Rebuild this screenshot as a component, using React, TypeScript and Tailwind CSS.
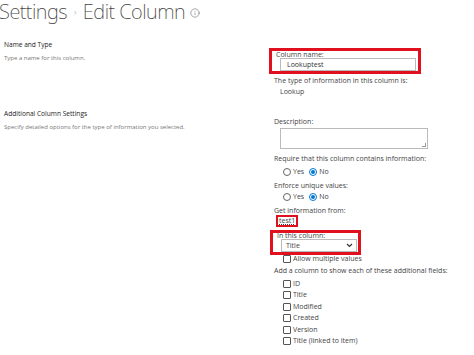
import React from 'react'
import { Info } from 'lucide-react'

const font = "font-['Open_Sans','Liberation_Sans',sans-serif]"

function Radio({ label, checked }: { label: string; checked?: boolean }) {
  return (
    <span className="flex items-center gap-[2px] mr-[5px]">
      <span
        className={
          'w-[8px] h-[8px] rounded-full border flex items-center justify-center ' +
          (checked ? 'border-[#0078d4]' : 'border-[#666]')
        }
      >
        {checked && <span className="w-[4px] h-[4px] rounded-full bg-[#0078d4]" />}
      </span>
      {label}
    </span>
  )
}

function Check({ label }: { label: string }) {
  return (
    <div className="flex items-center gap-[2px] h-[11.4px]">
      <span className="w-[8px] h-[8px] border border-[#555] rounded-[1px] bg-white" />
      <span>{label}</span>
    </div>
  )
}

const fields = ['ID', 'Title', 'Modified', 'Created', 'Version', 'Title (linked to item)']

export default function App() {
  return (
    <div className={'w-[474px] h-[355px] overflow-hidden bg-white text-[#333] ' + font}>
      <div className="flex items-center text-[20px] font-extralight text-[#444] leading-[24px] tracking-[-0.5px] font-['Noto_Sans','Lato',sans-serif]">
        <span className="-ml-[1px]">Settings</span>
        <span className="mx-[7px] text-[10px] text-[#999]">›</span>
        <span>Edit Column</span>
        <Info size={10} strokeWidth={1.4} className="ml-[5px] mt-[1px] text-[#666]" />
      </div>

      <div className="flex text-[7px] leading-[12px]">
        <div className="w-[270px] pl-[4px] pt-[15px]">
          <div className="text-[6.6px] text-[#222]">Name and Type</div>
          <div className="text-[6px] text-[#777] mt-[1px]">Type a name for this column.</div>
        </div>
        <div className="pt-[24px]">
          <div className="w-[152px] h-[26px] border-[3px] border-[#e0101e] pl-[4px] -ml-[1px]">
            <div className="leading-[7px] h-[7px] text-[#444]">Column name:</div>
            <div className="ml-[4px] w-[136px] h-[13px] border border-[#bbb] pl-[6px] leading-[11px]">
              Lookuptest
            </div>
          </div>
          <div className="mt-[1px] ml-[4px] text-[#444]">The type of information in this column is:</div>
          <div className="ml-[10px] -mt-[1px] text-[#444]">Lookup</div>
        </div>
      </div>

      <div className="flex text-[7px] leading-[12px]">
        <div className="w-[270px] pl-[4px] pt-[10px]">
          <div className="text-[6.6px] text-[#222]">Additional Column Settings</div>
          <div className="text-[6px] text-[#777] mt-[1px]">
            Specify detailed options for the type of information you selected.
          </div>
        </div>
        <div className="pt-[18px] pl-[4px] text-[#444]">
          <div className="h-[12px]">Description:</div>
          <div className="ml-[6px] w-[148px] h-[21px] border border-[#bbb] relative">
            <span className="absolute right-[1px] bottom-[1px] w-[4px] h-[4px] border-r border-b border-[#999]" />
          </div>
          <div className="mt-[4px] h-[12px]">Require that this column contains information:</div>
          <div className="flex items-center pl-[9px] h-[12px] mt-[1px]">
            <Radio label="Yes" />
            <Radio label="No" checked />
          </div>
          <div className="mt-[2px] h-[11px]">Enforce unique values:</div>
          <div className="flex items-center pl-[9px] h-[12px]">
            <Radio label="Yes" />
            <Radio label="No" checked />
          </div>
          <div className="mt-[2px] h-[10px] leading-[11px]">Get information from:</div>
          <div className="ml-[2px] w-fit h-[12px] border-[2px] border-[#e0101e] px-[1px] leading-[8px] underline decoration-dotted">
            test1
          </div>
          <div className="-ml-[4px] mt-[3px] w-[91px] h-[25px] border-[3px] border-[#e0101e] pl-[4px]">
            <div className="leading-[6px] h-[6px]">In this column:</div>
            <div className="ml-[4px] w-[76px] h-[13px] border border-[#bbb] pl-[4px] pr-[3px] flex items-center justify-between">
              <span>Title</span>
              <svg width="7" height="5" viewBox="0 0 7 5">
                <path d="M1 1l2.5 2.5L6 1" fill="none" stroke="#333" strokeWidth="1.2" />
              </svg>
            </div>
          </div>
          <div className="ml-[9px] -mt-[2px]">
            <Check label="Allow multiple values" />
          </div>
          <div className="mt-[1px] h-[12px]">Add a column to show each of these additional fields:</div>
          <div className="ml-[9px] mt-[1px]">
            {fields.map((f, i) => (
              <Check key={i} label={f} />
            ))}
          </div>
        </div>
      </div>
    </div>
  )
}
